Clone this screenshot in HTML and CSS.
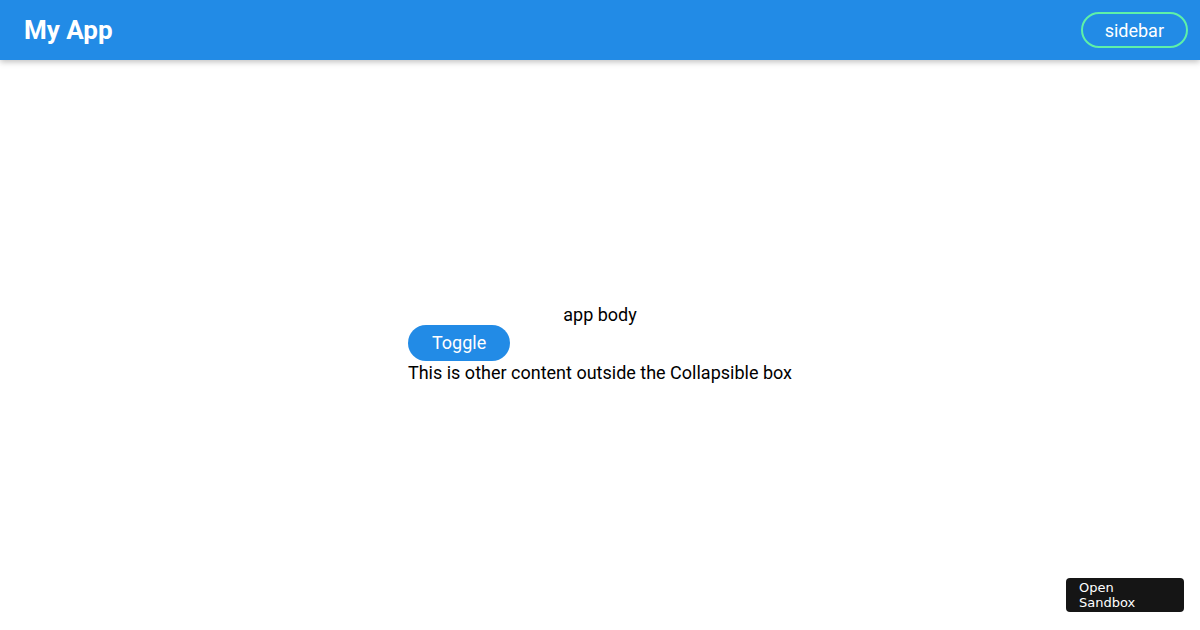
FILE: index.html
```html
<!DOCTYPE html>
<html lang="en">
<head>
  <meta charset="UTF-8" />
  <title>My App</title>
  <link rel="stylesheet" href="styles.css">
</head>
<body>
  <header class="app-header">
    <h1>My App</h1>
    <button class="sidebar-button">sidebar</button>
  </header>
  <main class="app-main">
    <div class="app-column">
      <div class="app-body">app body</div>
      <div><button class="toggle-button">Toggle</button></div>
      <p class="other">This is other content outside the Collapsible box</p>
    </div>
  </main>
  <a class="sandbox-link">Open Sandbox</a>
</body>
</html>
```

FILE: styles.css
```css
html, body {
  height: 100%;
}
body {
  margin: 0;
  font-family: Roboto, "Liberation Sans", sans-serif;
  color: #000;
  background: #fff;
  display: flex;
  flex-direction: column;
}
.app-header {
  height: 60px;
  flex: none;
  background: #228be6;
  display: flex;
  align-items: center;
  justify-content: space-between;
  padding: 0 12px 0 24px;
  box-shadow: 0 2px 6px rgba(0, 0, 0, 0.25);
}
.app-header h1 {
  margin: 0;
  color: #fff;
  font-size: 26px;
  font-weight: 700;
}
.sidebar-button {
  height: 36px;
  padding: 0 22px;
  border: 2px solid #5ef0a8;
  border-radius: 18px;
  background: transparent;
  color: #fff;
  font-family: inherit;
  font-size: 18px;
}
.app-main {
  flex: 1;
  display: flex;
  align-items: center;
  justify-content: center;
}
.app-column {
  display: flex;
  flex-direction: column;
}
.app-body {
  text-align: center;
  font-size: 18px;
  line-height: 20px;
}
.toggle-button {
  height: 36px;
  padding: 0 24px 1px;
  border: none;
  border-radius: 18px;
  background: #228be6;
  color: #fff;
  font-family: inherit;
  font-size: 18px;
}
.other {
  margin: 0;
  font-size: 18px;
  line-height: 24px;
}
.sandbox-link {
  position: fixed;
  right: 16px;
  bottom: 18px;
  width: 118px;
  height: 34px;
  box-sizing: border-box;
  padding: 2px 13px 0;
  background: #151515;
  border-radius: 4px;
  color: #fff;
  font-family: "DejaVu Sans", sans-serif;
  font-size: 13px;
  line-height: 15px;
  word-spacing: 40px;
}
```
